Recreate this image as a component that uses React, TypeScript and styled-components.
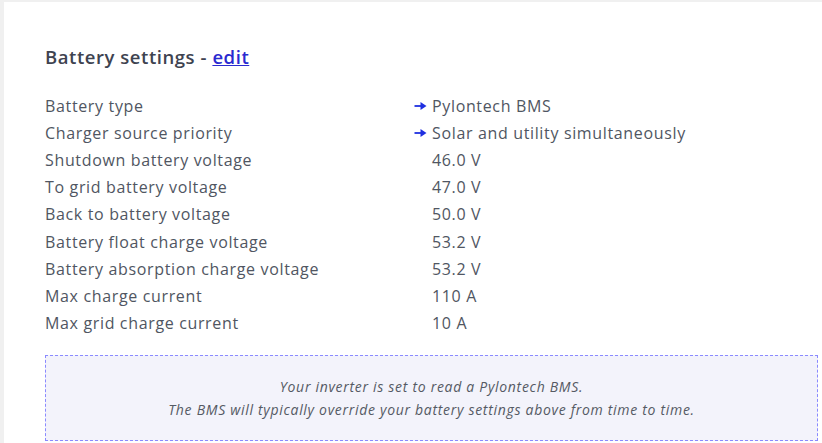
import React from "react";
import { createGlobalStyle, styled } from "styled-components";

type Row = { label: string; value: string; changed?: boolean };

const rows: Row[] = [
  { label: "Battery type", value: "Pylontech BMS", changed: true },
  { label: "Charger source priority", value: "Solar and utility simultaneously", changed: true },
  { label: "Shutdown battery voltage", value: "46.0 V" },
  { label: "To grid battery voltage", value: "47.0 V" },
  { label: "Back to battery voltage", value: "50.0 V" },
  { label: "Battery float charge voltage", value: "53.2 V" },
  { label: "Battery absorption charge voltage", value: "53.2 V" },
  { label: "Max charge current", value: "110 A" },
  { label: "Max grid charge current", value: "10 A" },
];

function ArrowIcon() {
  return (
    <svg width="13" height="10" viewBox="0 0 13 10">
      <path d="M0.5 5 H8" stroke="#1f2fe0" strokeWidth="1.8" />
      <path d="M6.5 1 L12.5 5 L6.5 9 Z" fill="#1f2fe0" />
    </svg>
  );
}

function App() {
  return (
    <>
      <GlobalStyle />
      <Page>
        <Card>
          <Title>
            Battery settings - <EditLink href="#">edit</EditLink>
          </Title>
          <Settings>
            {rows.map((row) => (
              <React.Fragment key={row.label}>
                <Label>{row.label}</Label>
                <Value>
                  <Arrow>{row.changed && <ArrowIcon />}</Arrow>
                  {row.value}
                </Value>
              </React.Fragment>
            ))}
          </Settings>
          <Note>
            Your inverter is set to read a Pylontech BMS.
            <br />
            The BMS will typically override your battery settings above from time to time.
          </Note>
        </Card>
      </Page>
    </>
  );
}

export default App;

const GlobalStyle = createGlobalStyle`
  html, body {
    margin: 0;
    padding: 0;
    background: #f0f0f0;
    overflow: hidden;
  }
  body {
    font-family: "Open Sans", "Noto Sans", sans-serif;
  }
`;

const Page = styled.div`
  padding: 2px 0 0 4px;
  width: 822px;
  height: 443px;
  box-sizing: border-box;
  overflow: hidden;
`;

const Card = styled.div`
  background: #fff;
  width: 860px;
  height: 460px;
  padding: 42px 0 0 41px;
  box-sizing: border-box;
`;

const Title = styled.h2`
  margin: 0 0 23px 0;
  font-size: 18.5px;
  font-weight: 600;
  color: #3e4350;
  letter-spacing: 0.55px;
`;

const EditLink = styled.a`
  color: #2a2ad0;
  text-decoration: underline;
`;

const Settings = styled.div`
  display: grid;
  grid-template-columns: 369px 1fr;
  grid-auto-rows: 27.2px;
  align-items: center;
  font-size: 16px;
  letter-spacing: 0.65px;
  color: #505662;
`;

const Label = styled.div`
  white-space: nowrap;
`;

const Value = styled.div`
  display: flex;
  align-items: center;
  white-space: nowrap;
`;

const Arrow = styled.span`
  display: inline-flex;
  align-items: center;
  width: 18px;
  height: 10px;
`;

const Note = styled.div`
  margin-top: 18px;
  width: 773px;
  height: 86px;
  box-sizing: border-box;
  padding-top: 19px;
  background: #f3f3fb;
  border: 1px dashed #8a8aff;
  text-align: center;
  font-style: italic;
  font-size: 14px;
  letter-spacing: 0.7px;
  line-height: 23px;
  color: #555a64;
`;
